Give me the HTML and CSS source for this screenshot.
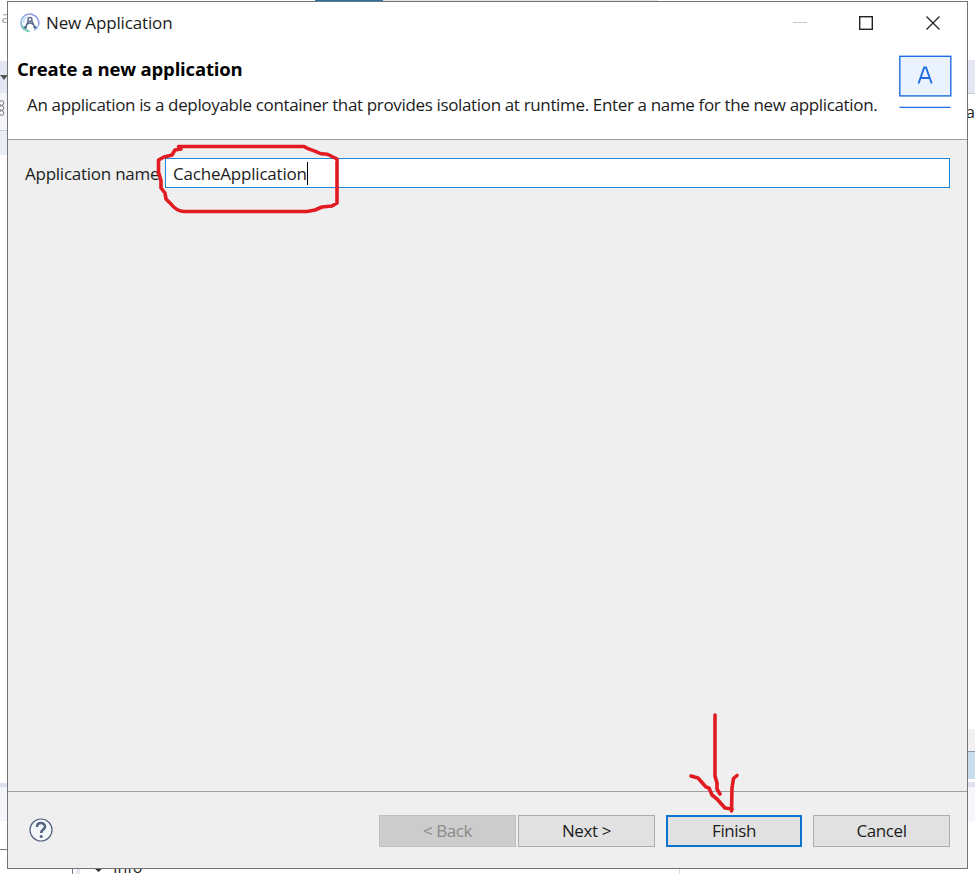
FILE: index.html
```
<!DOCTYPE html>
<html lang="en">

<head>
    <meta charset="UTF-8" />
    <meta name="viewport" content="width=device-width, initial-scale=1.0" />
    <title>New Application</title>
    <link rel="stylesheet" href="styles.css">
</head>

<body>
    <!-- window behind the dialog -->
    <svg class="backdrop" width="975" height="874" viewBox="0 0 975 874">
        <rect x="315" width="68" height="3" fill="#2470ab" />
        <rect x="383" width="275" height="2" fill="#e4e4e4" />
        <rect y="61" width="8" height="32" fill="#e4e6f4" />
        <path d="M0 75h8l-4 5z" fill="#555" />
        <rect y="93" width="8" height="37" fill="#f3f5fb" />
        <path d="M0 130.500h8" stroke="#c9ced8" />
        <rect y="131" width="8" height="24" fill="#e9eef4" />
        <g fill="none" stroke="#777">
            <circle cx="1.500" cy="103" r="2.300" />
            <circle cx="1.500" cy="108" r="2.300" />
            <circle cx="1.500" cy="113" r="2.300" />
        </g>
        <text class="back_text light" x="-3" y="23">,a</text>
        <rect y="783" width="8" height="4" fill="#dfe1f3" />
        <rect y="787" width="8" height="34" fill="#f3f5fb" />
        <path d="M0 849.500h8M72.500 868v6" stroke="#777" />
        <rect x="76" y="868" width="4" height="6" fill="#e4e6f2" />
        <path d="M94 868h9l-4.500 4z" fill="#333" />
        <text class="back_text" x="113" y="873">Info</text>
        <path d="M679.500 868v6" stroke="#ddd" />
        <rect x="967" y="60" width="8" height="33" fill="#e4e6f4" />
        <path d="M967 93.500h8" stroke="#cccdd6" />
        <text class="back_text" x="966" y="118">a</text>
        <rect x="967" y="729" width="8" height="22" fill="#f0f0f0" />
        <rect x="967" y="751" width="8" height="28" fill="#c9dcee" />
        <path d="M967 751.500h8" stroke="#8c9baa" />
        <rect x="967" y="782" width="8" height="5" fill="#dfe1f3" />
        <rect x="967" y="787" width="8" height="35" fill="#f6f6fc" />
    </svg>

    <main class="dialog">
        <div class="titlebar">
            <svg class="app_icon" width="20" height="20" viewBox="0 0 20 20" fill="none">
                <path d="M4 16.500A9 9 0 0 1 5 2.500" stroke="#8bb5e6" stroke-width="1.600" />
                <path d="M5 2.500A9 9 0 0 1 18.500 12" stroke="#8e9be2" stroke-width="1.600" />
                <path d="M18.500 12A9 9 0 0 1 14 17.500" stroke="#a6c8ee" stroke-width="1.500" />
                <path d="M1.500 12C3 16 5 18.500 10 18.800L5.500 15.500Z" fill="#75cbb8" stroke="#75cbb8" />
                <path d="M3.500 10A6.500 6.500 0 0 1 8 3.800" stroke="#b8cff2" stroke-width="1.200" />
                <path d="M5.500 14.500L8.500 7.500M11.500 7.500L15 14.500M7 11.500C9 9.500 11 9.500 13 11.500" stroke="#59658f" stroke-width="1.500" />
                <circle cx="10" cy="6.500" r="2" stroke="#59658f" stroke-width="1.300" />
                <circle cx="5.500" cy="14.300" r="1.500" fill="#59658f" />
                <circle cx="15" cy="14.300" r="1.500" fill="#59658f" />
            </svg>
            <span class="title">New Application</span>
            <svg class="controls" width="150" height="18" viewBox="0 0 150 18" fill="none">
                <path d="M1 8.500h14" stroke="#c8c8c8" />
                <rect x="67.700" y="2.700" width="12.600" height="12.600" stroke="#222" stroke-width="1.400" />
                <path d="M134.500 2.500l13 13M147.500 2.500l-13 13" stroke="#222" stroke-width="1.300" />
            </svg>
        </div>

        <header class="banner">
            <div class="banner_text">
                <h1>Create a new application</h1>
                <p>An application is a deployable container that provides isolation at runtime. Enter a name for the new application.</p>
            </div>
            <svg class="banner_icon" width="54" height="54" viewBox="0 0 54 54" fill="none" stroke="#1f6de0">
                <rect x="1.800" y="1.300" width="51" height="39.600" fill="#ebf2ff" stroke-width="1.400" />
                <path d="M20.500 28.500L26.200 12.500H28L33.700 28.500M22.600 23H31.600" stroke-width="1.900" />
                <path d="M1.500 52.400h51" stroke-width="1.400" />
            </svg>
        </header>

        <section class="content">
            <label class="name_label">Application name</label>
            <div class="name_input"><span>CacheApplication</span><i class="caret"></i></div>
        </section>

        <footer class="footer">
            <svg class="help" width="24" height="24" viewBox="0 0 24 24" fill="none" stroke="#53627f">
                <circle cx="12" cy="12" r="11" fill="#f5f8fa" stroke-width="1.200" />
                <path d="M8 9C8 3.800 16 3.800 16 8.700C16 11.600 12.200 11.400 12.200 15" stroke-width="2.500" />
                <circle cx="12.200" cy="18.500" r="1.500" fill="#53627f" stroke="none" />
            </svg>
            <div class="btn_list">
                <div class="btn disabled">&lt; Back</div>
                <div class="btn next">Next &gt;</div>
                <div class="btn default">Finish</div>
                <div class="btn">Cancel</div>
            </div>
        </footer>
    </main>

    <!-- hand drawn marks -->
    <svg class="marks" width="975" height="874" viewBox="0 0 975 874">
        <path d="M178.500 146.500H304C309 150 314 150 319 153C323 155 326 153 329 155L337 159V203L332 206L322 207L315 210L307 211.500H184C178 211 174 208 171 204L166 199L165 193L161 188V181L158.500 172V160L164 157L172 155L175 150L181 149" />
        <path d="M715 715V776L717 783V789L720 794" />
        <path d="M691 776L698 778L706 787L709 788L712 795L717 799L725 808L732 809" />
        <path d="M737 775.500L733.500 778.500L732 788L731.500 811" />
    </svg>
</body>

</html>
```
FILE: styles.css
```
html,
body {
    height: 100%;
    padding: 0;
    margin: 0;
}

body {
    position: relative;
    overflow: hidden;
    background: #fff;
    font-family: "Open Sans", "Noto Sans", sans-serif;
    font-size: 17px;
    color: #1c1c1c;
}

.backdrop,
.marks {
    position: absolute;
    top: 0;
    left: 0;
}

.back_text {
    font-size: 16px;
    fill: #222;
}

.back_text.light {
    fill: #aaa;
}

.dialog {
    position: relative;
    box-sizing: border-box;
    width: 961px;
    height: 868px;
    margin-left: 7px;
    border: 1px solid #747474;
    background: #efefef;
    display: flex;
    flex-direction: column;
    top: 1px;
}

.titlebar {
    box-sizing: border-box;
    height: 43px;
    padding: 0 25px 2px 12px;
    background: #fff;
    display: flex;
    align-items: center;
}

.title {
    flex: 1;
    margin-left: 6px;
    letter-spacing: -0.15px;
}

.banner {
    box-sizing: border-box;
    height: 95px;
    padding: 10px 15px 0 9px;
    background: #fff;
    border-bottom: 1px solid #a0a0a0;
    display: flex;
    justify-content: space-between;
}

.banner h1 {
    margin: -1px 0 0;
    font-size: 18.5px;
    line-height: 30px;
    letter-spacing: -0.17px;
    color: #000;
}

.banner p {
    margin: 9px 0 0 10px;
    line-height: 24px;
    white-space: nowrap;
    letter-spacing: -0.35px;
}

.banner_text {
    width: 870px;
}

.banner_icon {
    flex: none;
}

.content {
    flex: 1;
    padding: 18px 17px 0;
    display: flex;
    align-items: flex-start;
}

.name_label {
    width: 140px;
    line-height: 31px;
    white-space: nowrap;
    letter-spacing: -0.25px;
}

.name_input {
    flex: 1;
    box-sizing: border-box;
    height: 30px;
    padding-left: 7px;
    border: 1px solid #1f86d9;
    background: #fff;
    display: flex;
    align-items: center;
    letter-spacing: -0.2px;
}

.caret {
    width: 1px;
    height: 23px;
    background: #000;
}

.footer {
    box-sizing: border-box;
    height: 77px;
    padding: 0 17px 0 21px;
    border-top: 1px solid #a0a0a0;
    display: flex;
    align-items: center;
    justify-content: space-between;
}

.btn_list {
    display: flex;
    padding-top: 1px;
}

.btn {
    box-sizing: border-box;
    width: 137px;
    height: 32px;
    border: 1px solid #adadad;
    background: #e1e1e1;
    display: flex;
    align-items: center;
    justify-content: center;
    letter-spacing: -0.4px;
}

.btn.disabled {
    border-color: #bfbfbf;
    background: #ccc;
    color: #8a8a8a;
}

.btn.next {
    margin: 0 11px 0 2px;
}

.btn.default {
    margin-right: 11px;
    width: 136px;
    border: 2px solid #0b74cf;
}

.marks {
    fill: none;
    stroke: #e11b22;
    stroke-width: 3.6;
    stroke-linecap: round;
    stroke-linejoin: round;
}
```
